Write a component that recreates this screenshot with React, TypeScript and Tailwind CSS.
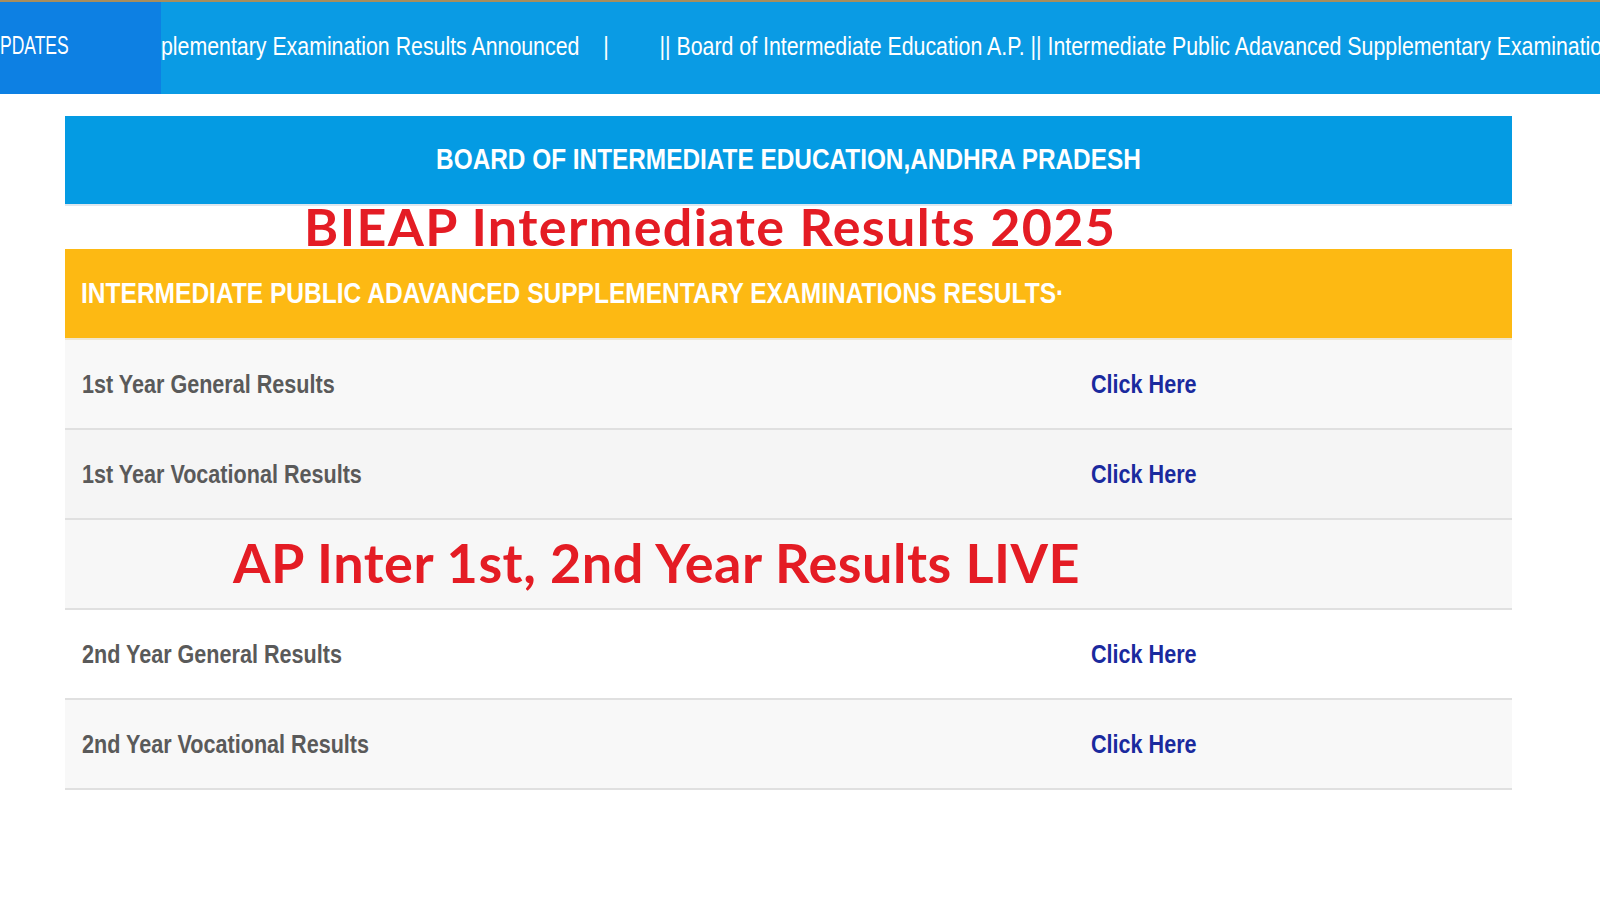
import React from "react";

const arial = "font-['Liberation_Sans','Arial',sans-serif]";

const rows = [
  { label: "1st Year General Results", bg: "bg-[#f8f8f8]" },
  { label: "1st Year Vocational Results", bg: "bg-[#f5f5f5]" },
];
const rows2 = [
  { label: "2nd Year General Results", bg: "bg-white" },
  { label: "2nd Year Vocational Results", bg: "bg-[#f8f8f8]" },
];

function Row({ label, bg }: { label: string; bg: string }) {
  return (
    <div className={`flex h-[90px] items-center border-b-2 border-[#e0e0e0] pl-[17px] ${bg}`}>
      <div className="w-[1009px] whitespace-nowrap">
        <span className={`inline-block origin-left scale-x-[0.83] text-[26px] font-bold text-[#5a5a5a] ${arial}`}>
          {label}
        </span>
      </div>
      <a className={`inline-block origin-left scale-x-[0.83] whitespace-nowrap text-[26px] font-bold text-[#1a2a9e] ${arial}`}>
        Click Here
      </a>
    </div>
  );
}

export default function App() {
  return (
    <div className="h-[900px] w-[1600px] overflow-hidden bg-white">
      {/* ticker bar */}
      <div className="flex h-[94px] border-t-2 border-[#a88d5c] bg-[#0a9be4]">
        <div className={`flex w-[161px] shrink-0 items-center overflow-hidden whitespace-nowrap bg-[#0d80e3] pb-[4px] text-[25px] text-white ${arial}`}>
          <span className="inline-block origin-left scale-x-[0.7]">PDATES</span>
        </div>
        <div className={`flex flex-1 items-center overflow-hidden whitespace-nowrap pb-[4px] text-[26px] text-white ${arial}`}>
          <span className="inline-block origin-left scale-x-[0.82]">
            <span>plementary Examination Results Announced</span>
            <span className="ml-[29px]">|</span>
            <span className="ml-[62px]">
              || Board of Intermediate Education A.P. || Intermediate Public Adavanced Supplementary Examinations Results
            </span>
          </span>
        </div>
      </div>

      <div className="ml-[65px] mt-[22px] w-[1447px]">
        <div className="flex h-[90px] items-center justify-center border-b-2 border-[#dfe7ee] bg-[#049be3]">
          <span className={`inline-block scale-x-[0.84] whitespace-nowrap text-[29px] font-bold text-white ${arial}`}>
            BOARD OF INTERMEDIATE EDUCATION,ANDHRA PRADESH
          </span>
        </div>
        <div className="h-[43px] whitespace-nowrap pl-[239px]">
          <span className="font-['Lato',sans-serif] text-[52px] font-bold leading-[41px] tracking-[1.4px] text-[#e41c24]">
            BIEAP Intermediate Results 2025
          </span>
        </div>
        <div className="flex h-[91px] items-center whitespace-nowrap border-b-2 border-[#efe6cf] bg-[#fdb913] pl-[16px]">
          <span className={`inline-block origin-left scale-x-[0.846] text-[29px] font-bold text-white ${arial}`}>
            INTERMEDIATE PUBLIC ADAVANCED SUPPLEMENTARY EXAMINATIONS RESULTS·
          </span>
        </div>
        {rows.map((r) => (
          <Row key={r.label} {...r} />
        ))}
        <div className="flex h-[90px] items-center whitespace-nowrap border-b-2 border-[#e0e0e0] bg-[#f7f7f7] pb-[2px] pl-[168px]">
          <span className="font-['Lato',sans-serif] text-[54px] font-bold leading-none tracking-[0.5px] text-[#e41c24]">
            AP Inter 1st, 2nd Year Results LIVE
          </span>
        </div>
        {rows2.map((r) => (
          <Row key={r.label} {...r} />
        ))}
      </div>
    </div>
  );
}
